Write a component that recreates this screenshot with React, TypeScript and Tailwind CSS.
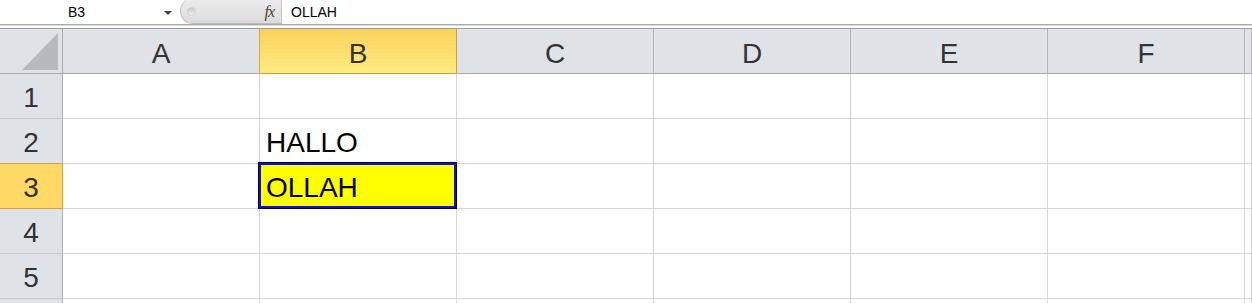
import React from 'react'

const cols = ['A', 'B', 'C', 'D', 'E', 'F', '']
const rows = [1, 2, 3, 4, 5, 6]

const cells: Record<string, string> = {
  B2: 'HALLO',
  B3: 'OLLAH',
}

function ColumnHeader({ label, index }: { label: string; index: number }) {
  const selected = label === 'B'
  // the line left of B belongs to A, so it takes the orange tint too
  const beforeSelected = label === 'A'
  return (
    <div
      className={`h-[45px] border-b border-r flex items-start justify-center pt-[9px] text-[28px] leading-[32px] text-[#333] ${
        selected
          ? 'bg-gradient-to-b from-[#f9d25a] to-[#ffec82] border-[#d69e3e]'
          : 'bg-[#dfe3e8] border-b-[#ababab] ' + (beforeSelected ? 'border-r-[#dea544]' : 'border-r-[#b3b7bc]')
      }`}
      data-col={index}
    >
      {label}
    </div>
  )
}

function RowHeader({ n }: { n: number }) {
  const selected = n === 3
  const beforeSelected = n === 2
  return (
    <div
      className={`h-[45px] border-b border-r flex items-start justify-center pt-[8px] text-[28px] leading-[32px] text-[#333] ${
        selected
          ? 'bg-[#ffd965] border-[#d69e3e]'
          : 'bg-[#dfe3e8] border-r-[#a9adb2] ' + (beforeSelected ? 'border-b-[#d69e3e]' : 'border-b-[#c6cacf]')
      }`}
    >
      {/* row 6 only peeks in at the bottom edge, its number is out of view */}
      {n < 6 ? n : null}
    </div>
  )
}

function Cell({ id }: { id: string }) {
  const value = cells[id]
  const active = id === 'B3'
  return (
    <div
      className={`relative h-[45px] border-b border-r border-[#d4d4d4] pl-[6px] pt-[8px] text-[28px] leading-[32px] text-black ${
        active ? 'bg-[#ffff00]' : 'bg-white'
      }`}
    >
      {value}
      {active && (
        <>
          <div className="absolute -top-[2px] -left-[2px] -right-[1px] -bottom-[1px] border border-black shadow-[inset_0_0_0_2px_#0a0aff]" />
          <div className="absolute -right-[3px] -bottom-[3px] w-[5px] h-[5px] bg-[#101050]" />
        </>
      )}
    </div>
  )
}

export default function App() {
  return (
    <div className="w-[1252px] h-[303px] overflow-hidden bg-white font-['Liberation_Sans',Arial,sans-serif]">
      {/* Formula bar */}
      <div className="flex h-[24px] items-stretch">
        <div className="w-[180px] flex items-center">
          <span className="pl-[68px] text-[14px] text-black">B3</span>
          <span className="ml-auto mr-[8px] mt-[1px] w-0 h-0 border-l-[4px] border-r-[4px] border-t-[4px] border-l-transparent border-r-transparent border-t-[#444]" />
        </div>
        <div className="w-[101px] flex items-center rounded-l-full border-l border-b border-[#bdbdbd] bg-gradient-to-b from-[#ececec] to-[#dcdcdc] -mt-[2px] h-[26px]">
          <span className="ml-[6px] mt-[1px] w-[9px] h-[9px] rounded-full bg-gradient-to-b from-[#c8c8c8] to-[#f2f2f2] border border-[#d0d0d0]" />
          <span className="ml-auto mr-[7px] mt-[2px] font-['Liberation_Serif',serif] italic text-[16px] text-[#444] tracking-[-1px]">
            fx
          </span>
        </div>
        <div className="flex-1 flex items-center border-l border-[#c8c8c8] pl-[9px] text-[14px] text-black">
          OLLAH
        </div>
      </div>
      <div className="h-px bg-[#a7a7a7]" />
      <div className="h-px bg-[#d8dce4]" />
      <div className="h-[2px] bg-white" />

      {/* Sheet grid */}
      <div className="grid grid-cols-[63px_repeat(6,197px)_1fr] border-t border-[#9c9c9c]">
        <div className="relative h-[45px] bg-[#dfe3e8] border-b border-r border-[#ababab]">
          <svg className="absolute inset-0" width="62" height="44" viewBox="0 0 62 44">
            <polygon points="58,4 58,41 22,41" fill="#b6babf" />
          </svg>
        </div>
        {cols.map((c, i) => (
          <ColumnHeader key={i} label={c} index={i} />
        ))}

        {rows.map(r => (
          <React.Fragment key={r}>
            <RowHeader n={r} />
            {cols.map((c, i) => (
              <Cell key={i} id={`${c || 'G'}${r}`} />
            ))}
          </React.Fragment>
        ))}
      </div>
    </div>
  )
}
